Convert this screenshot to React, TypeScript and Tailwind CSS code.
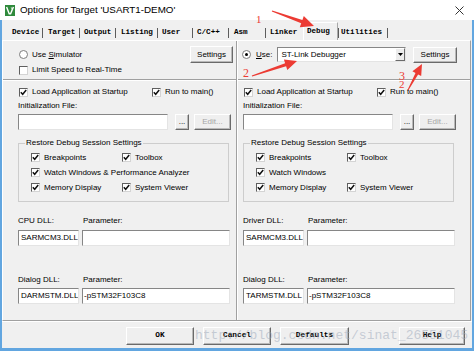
import type { ReactNode } from "react";

// Keil "Options for Target" dialog, Debug tab.

const tabs = [
  { label: "Device", cls: "w-[40px] pl-[10px]" },
  { label: "Target", cls: "w-[36px] pl-[5px]" },
  { label: "Output", cls: "w-[35px] pl-[4px]" },
  { label: "Listing", cls: "w-[41px] pl-[5px]" },
  { label: "User", cls: "w-[34px] pl-[4px]" },
  { label: "C/C++", cls: "w-[35px] pl-[4px]" },
  { label: "Asm", cls: "w-[36px] pl-[5px]" },
  { label: "Linker", cls: "w-[37px] pl-[4px]" },
];

function Check({ on = true }: { on?: boolean }) {
  return (
    <span className="flex h-[9px] w-[9px] shrink-0 items-center justify-center border border-t-[#5f5f5f] border-l-[#5f5f5f] border-r-[#d4d4d4] border-b-[#d4d4d4] bg-white">
      {on ? (
        <svg width="7" height="7" viewBox="0 0 7 7" aria-hidden="true">
          <path d="M0.8 3.3 2.7 5.3 6.2 1.1" fill="none" stroke="#111" strokeWidth="1.5" />
        </svg>
      ) : null}
    </span>
  );
}

function CheckRow({ label, on = true, className = "" }: { label: ReactNode; on?: boolean; className?: string }) {
  return (
    <span className={`flex h-[12px] items-center gap-[4px] ${className}`}>
      <Check on={on} />
      <span className="whitespace-nowrap">{label}</span>
    </span>
  );
}

function Radio({ on = false }: { on?: boolean }) {
  return (
    <span className="flex h-[9px] w-[9px] shrink-0 items-center justify-center rounded-full border border-[#7d7d7d] bg-white">
      {on ? <span className="h-[3px] w-[3px] rounded-full bg-black" /> : null}
    </span>
  );
}

function Btn({ children, className = "", disabled }: { children: ReactNode; className?: string; disabled?: boolean }) {
  return (
    <div
      className={`flex shrink-0 items-center justify-center border border-t-white border-l-white border-r-[#6a6a6a] border-b-[#6a6a6a] bg-[#efefef] shadow-[inset_-1px_-1px_0_#b9b9b9] ${
        disabled ? "text-[#a6a6a6]" : "text-black"
      } ${className}`}
    >
      {children}
    </div>
  );
}

function Field({ value, className = "" }: { value?: string; className?: string }) {
  return (
    <div
      className={`flex h-[16px] shrink-0 items-center overflow-hidden whitespace-nowrap border border-t-[#868686] border-l-[#868686] border-r-[#e4e4e4] border-b-[#e4e4e4] bg-white ${className}`}
    >
      {value}
    </div>
  );
}

interface ColumnProps {
  top: ReactNode;
  limit?: ReactNode;
  watch: string;
  dllLabel: string;
  dll: string;
  dialog: string;
  className: string;
  sepClass: string;
}

function Column({ top, limit, watch, dllLabel, dll, dialog, className, sepClass }: ColumnProps) {
  return (
    <div className={`flex flex-col text-[8px] leading-[12px] ${className}`}>
      <div className="mt-[5px] flex h-[17px] items-center">{top}</div>
      <div className="mt-[1px] flex h-[12px] items-center">{limit}</div>
      <div className={`mt-[3px] h-[2px] border-t border-t-[#a0a0a0] border-b border-b-white ${sepClass}`} />
      <div className="mt-[5px] flex h-[12px] items-center">
        <CheckRow label="Load Application at Startup" className="ml-[1px] w-[133px]" />
        <CheckRow label="Run to main()" />
      </div>
      <div className="mt-[2px] flex h-[12px] items-center">Initialization File:</div>
      <div className="mt-[2px] flex h-[16px] items-center">
        <Field className="w-[150px]" />
        <Btn className="ml-[7px] h-[16px] w-[14px] leading-none">...</Btn>
        <Btn disabled className="ml-[5px] h-[16px] w-[37px]">
          Edit...
        </Btn>
      </div>
      <fieldset className="mt-[8px] w-[211px] border border-[#cdcdcd] pb-[6px]">
        <legend className="ml-[6px] px-[1px] leading-[10px]">Restore Debug Session Settings</legend>
        <div className="mt-[2px] flex h-[15px] items-center pl-[12px]">
          <CheckRow label="Breakpoints" className="w-[91px]" />
          <CheckRow label="Toolbox" />
        </div>
        <div className="flex h-[15px] items-center pl-[12px]">
          <CheckRow label={watch} />
        </div>
        <div className="flex h-[15px] items-center pl-[12px]">
          <CheckRow label="Memory Display" className="w-[91px]" />
          <CheckRow label="System Viewer" />
        </div>
      </fieldset>
      <div className="mt-[13px] flex h-[12px] items-center">
        <span className="w-[65px]">{dllLabel}</span>
        <span>Parameter:</span>
      </div>
      <div className="mt-[3px] flex h-[16px]">
        <Field className="w-[61px] pl-[2px]" value={dll} />
        <Field className="ml-[3px] w-[148px]" />
      </div>
      <div className="mt-[28px] flex h-[12px] items-center">
        <span className="w-[65px]">Dialog DLL:</span>
        <span>Parameter:</span>
      </div>
      <div className="mt-[2px] flex h-[16px]">
        <Field className="w-[61px] pl-[2px]" value={dialog} />
        <Field className="ml-[3px] w-[148px] pl-[1px]" value="-pSTM32F103C8" />
      </div>
    </div>
  );
}

export default function App() {
  return (
    <div className="relative flex h-[351px] w-[474px] flex-col overflow-hidden bg-[#f0f0f0] font-['Liberation_Sans',Arial,sans-serif] text-black">
      {/* title bar */}
      <div className="flex h-[20px] shrink-0 items-center bg-white pl-[5px] pr-[10px]">
        <svg width="10" height="11" viewBox="0 0 10 11" aria-hidden="true">
          <rect x="0" y="0" width="10" height="11" fill="#2f8a3c" />
          <path d="M1.6 2 4.2 8.8 5.6 8.8 8.4 2" fill="none" stroke="#fff" strokeWidth="1.4" />
          <path d="M6.2 2.2 7 4.6" stroke="#cfe8c9" strokeWidth="0.9" />
        </svg>
        <span className="ml-[5px] text-[9.8px]">Options for Target 'USART1-DEMO'</span>
        <svg className="ml-auto" width="9" height="9" viewBox="0 0 9 9" aria-hidden="true">
          <path d="M0.5 0.5 8.5 8.5M8.5 0.5 0.5 8.5" stroke="#333" strokeWidth="1" />
        </svg>
      </div>

      {/* window body */}
      <div className="flex flex-1 flex-col border-x-2 border-b-[3px] border-[#62a6e0]">
        {/* tabs */}
        <div className="flex h-[20px] shrink-0 items-end font-['Liberation_Mono','Courier_New',monospace] text-[7.6px] font-bold">
          {tabs.map((t, i) => (
            <div key={t.label} className="flex items-end">
              {i > 0 ? <span className="mb-[2px] h-[10px] w-px bg-[#5c5c5c]" /> : null}
              <span className={`flex h-[14px] items-center ${t.cls}`}>{t.label}</span>
            </div>
          ))}
          <span className="flex h-[18px] w-[35px] items-start border-t border-l border-t-white border-l-white border-r border-r-[#a9a9a9] pl-[3px] pt-[3px] leading-[10px]">
            Debug
          </span>
          <span className="mb-[2px] h-[10px] w-px bg-[#5c5c5c]" />
          <span className="flex h-[14px] w-[48px] items-center pl-[2px]">Utilities</span>
          <span className="mb-[2px] h-[10px] w-px bg-[#5c5c5c]" />
        </div>

        {/* tab page */}
        <div className="mr-[1px] flex h-[281px] shrink-0 border-t border-l border-t-white border-l-white border-r border-b border-r-[#a0a0a0] border-b-[#a0a0a0]">
          <Column
            className="w-[234px] border-r border-r-[#a0a0a0] pl-[15px] pr-[3px]"
            sepClass="-ml-[15px] -mr-[3px]"
            top={
              <>
                <span className="ml-[1px] flex items-center gap-[4px]">
                  <Radio />
                  <span>
                    Use <span className="underline">S</span>imulator
                  </span>
                </span>
                <Btn className="ml-auto h-[17px] w-[43px]">Settings</Btn>
              </>
            }
            limit={<CheckRow on={false} label="Limit Speed to Real-Time" className="ml-[1px]" />}
            watch="Watch Windows & Performance Analyzer"
            dllLabel="CPU DLL:"
            dll="SARMCM3.DLL"
            dialog="DARMSTM.DLL"
          />
          <Column
            className="flex-1 border-l border-l-white pl-[5px] pr-[13px]"
            sepClass="-ml-[5px] -mr-[13px]"
            top={
              <>
                <span className="-ml-[1px] flex items-center gap-[5px]">
                  <Radio on />
                  <span>
                    <span className="underline">U</span>se:
                  </span>
                </span>
                <div className="ml-[5px] flex h-[15px] w-[129px] items-center border border-t-[#868686] border-l-[#868686] border-r-[#e4e4e4] border-b-[#e4e4e4] bg-white pl-[3px]">
                  <span className="flex-1 whitespace-nowrap">ST-Link Debugger</span>
                  <span className="flex h-full w-[10px] items-center justify-center border border-t-white border-l-white border-r-[#6a6a6a] border-b-[#6a6a6a] bg-[#ececec]">
                    <svg width="5" height="3" viewBox="0 0 5 3" aria-hidden="true">
                      <path d="M0 0h5L2.5 3z" fill="#000" />
                    </svg>
                  </span>
                </div>
                <Btn className="ml-auto h-[16px] w-[44px]">Settings</Btn>
              </>
            }
            watch="Watch Windows"
            dllLabel="Driver DLL:"
            dll="SARMCM3.DLL"
            dialog="TARMSTM.DLL"
          />
        </div>

        {/* dialog buttons */}
        <div className="flex flex-1 border-t border-t-white pl-[124px] pt-[5px] font-['Liberation_Mono','Courier_New',monospace] text-[7.8px] font-bold">
          <Btn className="h-[18px] w-[68px] border-[#4a4a4a]">OK</Btn>
          <Btn className="ml-[9px] h-[18px] w-[68px]">Cancel</Btn>
          <Btn className="ml-[9px] h-[18px] w-[69px]">Defaults</Btn>
          <Btn className="ml-[50px] h-[18px] w-[66px]">Help</Btn>
        </div>
      </div>

      {/* watermark */}
      <span className="pointer-events-none absolute left-[195px] top-[329px] whitespace-nowrap font-['Liberation_Mono','Courier_New',monospace] text-[13px] leading-[14px] text-[#9aa6b8]/50">
        http://blog.csdn.net/sinat_26551045
      </span>

      {/* red annotations */}
      <svg className="pointer-events-none absolute left-0 top-0" width="474" height="351" aria-hidden="true">
        <polygon points="272.2,10.5 302.4,19.9 303.8,16 314,26 299.8,27.2 301.2,23.3 271.8,11.5" fill="#ec3b33" />
        <polygon points="251.8,75.5 285.1,63.3 283.9,59.6 297,61 287.3,70 286.1,66.3 252.2,76.5" fill="#ec3b33" />
        <polygon points="407.6,89.8 415.5,73 412.4,71.3 422,64 421.2,76.1 418.1,74.4 408.4,90.2" fill="#ec3b33" />
      </svg>
      <span className="pointer-events-none absolute left-[256px] top-[13px] font-['Liberation_Serif',serif] text-[11px] leading-[12px] text-[#ec3b33]">
        1
      </span>
      <span className="pointer-events-none absolute left-[243px] top-[67px] font-['Liberation_Serif',serif] text-[12px] leading-[12px] text-[#ec3b33]">
        2
      </span>
      <span className="pointer-events-none absolute left-[399px] top-[70px] font-['Liberation_Serif',serif] text-[12px] leading-[12px] text-[#ec3b33]">
        3
      </span>
      <span className="pointer-events-none absolute left-[399px] top-[78px] font-['Liberation_Serif',serif] text-[11px] leading-[12px] text-[#ec3b33]">
        2
      </span>
    </div>
  );
}
